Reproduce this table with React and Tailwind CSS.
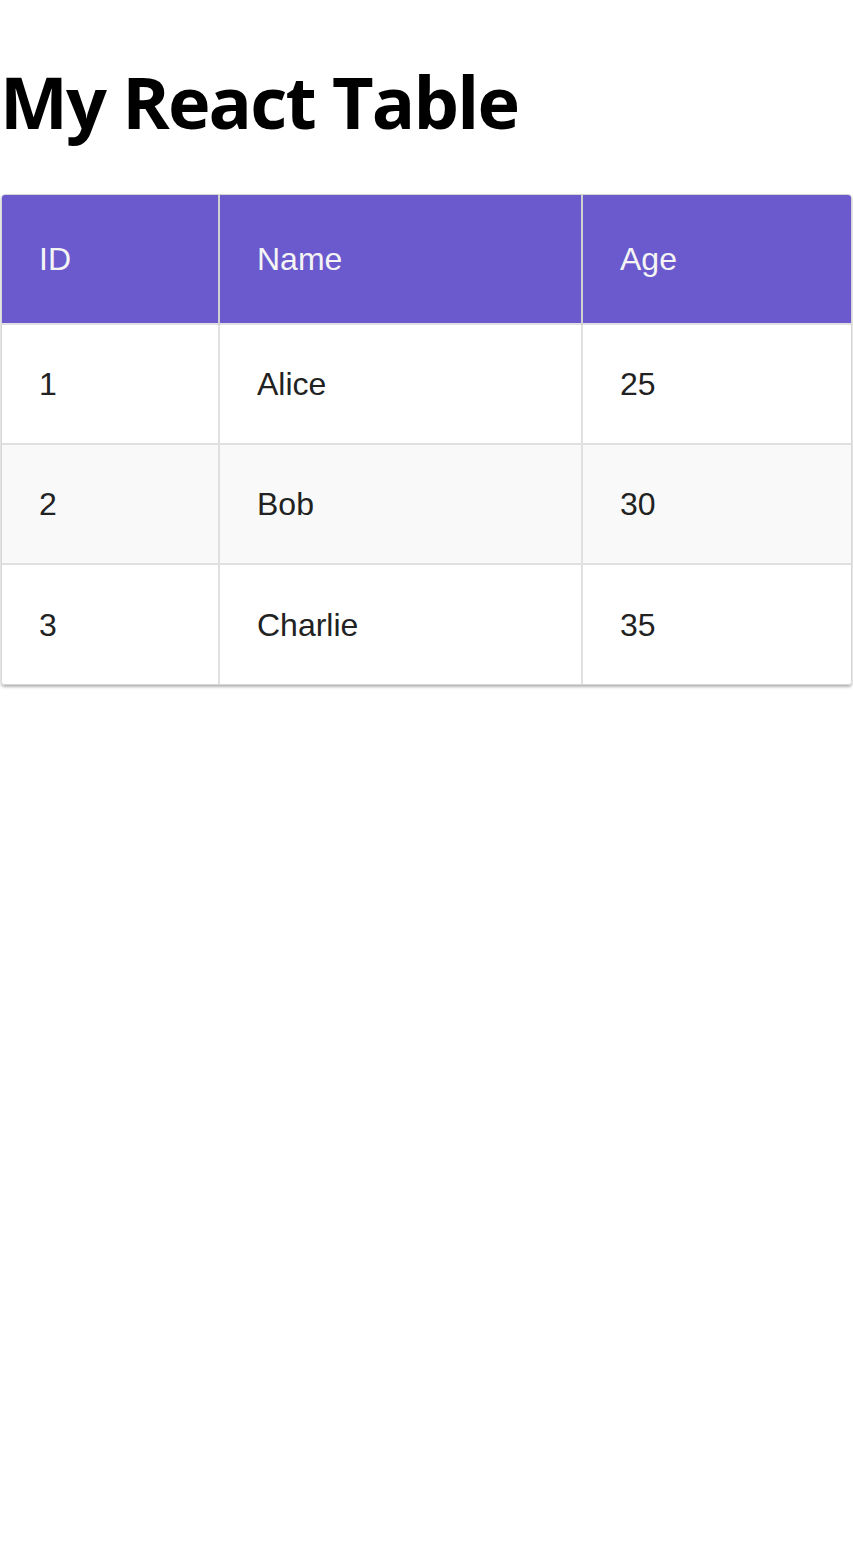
const rows = [
  { id: 1, name: "Alice", age: 25 },
  { id: 2, name: "Bob", age: 30 },
  { id: 3, name: "Charlie", age: 35 },
];

function App() {
  return (
    <div className="min-h-screen bg-white font-['Liberation_Sans',Arial,sans-serif]">
      <h1 className="pt-[51px] pb-[43px] text-[72px] leading-[100px] font-bold text-black font-['Open_Sans',sans-serif] tracking-[-1.8px]">
        My React Table
      </h1>
      <div className="ml-px w-[851px] overflow-hidden rounded-[4px] border border-[#d6d6d6] shadow-[0_2px_3px_rgba(0,0,0,0.3)]">
        <table className="w-full border-collapse text-[32px]">
          <thead>
            <tr className="h-[129px] bg-[#6a5acd] text-[#f4f4f4]">
              <th className="w-[217px] pl-[37px] text-left font-normal border-r-2 border-[#d0d0d0]">ID</th>
              <th className="w-[363px] pl-[37px] text-left font-normal border-r-2 border-[#d0d0d0]">Name</th>
              <th className="pl-[37px] text-left font-normal">Age</th>
            </tr>
          </thead>
          <tbody>
            {rows.map((r, i) => (
              <tr
                key={r.id}
                className={`h-[120px] text-[#222] border-t-2 border-[#e0e0e0] ${i % 2 === 1 ? "bg-[#f9f9f9]" : "bg-white"}`}
              >
                <td className="pl-[37px] border-r-2 border-[#e0e0e0]">{r.id}</td>
                <td className="pl-[37px] border-r-2 border-[#e0e0e0]">{r.name}</td>
                <td className="pl-[37px]">{r.age}</td>
              </tr>
            ))}
          </tbody>
        </table>
      </div>
    </div>
  );
}

export default App;
